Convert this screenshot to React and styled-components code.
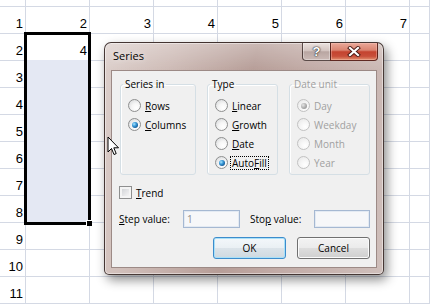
import React from 'react'
import styled, { createGlobalStyle } from 'styled-components'

const GlobalStyle = createGlobalStyle`
  html, body {
    margin: 0;
    padding: 0;
    background: #fff;
  }
`

const Page = styled.div`
  position: relative;
  width: 430px;
  height: 306px;
  overflow: hidden;
  background: #fff;
`

const Sheet = styled.div`
  display: grid;
  grid-template-columns: 26px repeat(6, 64px) 1fr;
  grid-template-rows: 7px repeat(11, 27px);
  font-family: "Liberation Sans", Arial, sans-serif;
  font-size: 13px;
`

const Cell = styled.div`
  grid-row: ${p => p.$row};
  grid-column: ${p => p.$col};
  display: flex;
  justify-content: flex-end;
  align-items: flex-end;
  padding: 0 2px 2px 0;
  line-height: 15px;
  color: #000;
  border-right: 1px solid #d4d9e4;
  border-bottom: 1px solid ${p => (p.$inSel ? '#e4e8f3' : '#d4d9e4')};
  background: ${p => (p.$shade ? '#e4e8f3' : '#fff')};
  overflow: hidden;
`

const Selection = styled.div`
  grid-row: 3 / 10;
  grid-column: 2;
  position: relative;
  margin: -2px -1px -2px -2px;
  border: 3px solid #000;
  pointer-events: none;
`

const FillHandle = styled.span`
  position: absolute;
  right: -4px;
  bottom: -4px;
  width: 5px;
  height: 5px;
  background: #000;
  border: 1px solid #fff;
  border-width: 1px 0 0 1px;
`

const Dialog = styled.div`
  position: absolute;
  left: 104px;
  top: 42px;
  width: 280px;
  height: 233px;
  box-sizing: border-box;
  display: flex;
  flex-direction: column;
  border: 1px solid rgba(45, 30, 28, 0.85);
  border-radius: 7px 7px 5px 5px;
  background:
    linear-gradient(180deg, rgba(255, 255, 255, 0.28) 0, rgba(255, 255, 255, 0) 28px),
    linear-gradient(100deg, #dccfcb 0%, #cdbab5 22%, #b69d97 48%, #c1aaa5 66%, #cfbfbb 100%);
  box-shadow: inset 0 0 0 1px rgba(255, 255, 255, 0.45), 3px 5px 11px rgba(0, 0, 0, 0.45);
  font-family: "Open Sans", "Noto Sans", sans-serif;
  font-size: 10px;
  color: #000;
`

const TitleBar = styled.div`
  height: 27px;
  display: flex;
  align-items: flex-start;
`

const Title = styled.div`
  padding-left: 8px;
  font-size: 11px;
  line-height: 25px;
  text-shadow: 0 0 6px rgba(255, 255, 255, 0.8);
`

const CaptionButtons = styled.div`
  margin-left: auto;
  margin-right: 5px;
  display: flex;
`

const HelpButton = styled.div`
  box-sizing: border-box;
  width: 28px;
  height: 18px;
  display: flex;
  align-items: center;
  justify-content: center;
  border: 1px solid rgba(55, 38, 36, 0.8);
  border-top: 0;
  border-right: 0;
  border-radius: 0 0 0 4px;
  background: linear-gradient(180deg, #ece2df 0%, #d3c4c0 45%, #b9a6a2 52%, #cbbab6 100%);
  box-shadow: inset 0 0 0 1px rgba(255, 255, 255, 0.35);
  font-family: "Liberation Sans", Arial, sans-serif;
  font-weight: bold;
  font-size: 13px;
  color: #fff;
  text-shadow: 0 0 1px #333, 0 0 1px #333, 0 0 2px #444;
`

const CloseButton = styled.div`
  box-sizing: border-box;
  width: 48px;
  height: 18px;
  display: flex;
  align-items: center;
  justify-content: center;
  border: 1px solid rgba(80, 28, 22, 0.9);
  border-top: 0;
  border-radius: 0 0 4px 0;
  background: linear-gradient(180deg, #eaa898 0%, #da8471 42%, #c4432f 52%, #c84f3a 78%, #e2906f 100%);
  box-shadow: inset 0 0 0 1px rgba(255, 210, 200, 0.35);
`

const Client = styled.div`
  flex: 1;
  margin: 0 6px 6px;
  display: flex;
  flex-direction: column;
  padding: 7px 6px 0 7px;
  border: 1px solid #9c8a86;
  background: #f0f0f0;
`

const GroupRow = styled.div`
  display: flex;
  gap: 11px;
  margin-left: 1px;
`

const Group = styled.fieldset`
  box-sizing: border-box;
  width: ${p => p.$w}px;
  margin: 0;
  padding: 0;
  border: 1px solid #d5dfe5;
  border-radius: 3px;
  box-shadow: inset 1px 1px 0 #fff;
`

const Legend = styled.legend`
  margin-left: 2px;
  padding: 0 2px;
  line-height: 13px;
  color: ${p => (p.$disabled ? '#a0a0a0' : '#000')};
`

const OptionList = styled.div`
  display: flex;
  flex-direction: column;
  padding: 5px 0 2px 7px;
`

const Option = styled.div`
  height: 19px;
  display: flex;
  align-items: center;
  gap: 2px;
  color: ${p => (p.$disabled ? '#a0a0a0' : '#000')};
`

const Radio = styled.span`
  position: relative;
  flex: none;
  box-sizing: border-box;
  width: 13px;
  height: 13px;
  border-radius: 50%;
  border: 1px solid ${p => (p.$disabled ? '#c2c2c2' : '#8e8f8f')};
  background: radial-gradient(circle at 65% 70%, #ffffff 0%, #f6f6f6 40%, ${p => (p.$disabled ? '#e6e6e6' : '#d2d4d6')} 100%);

  &::after {
    content: '';
    display: ${p => (p.$checked ? 'block' : 'none')};
    position: absolute;
    left: 2.5px;
    top: 2.5px;
    width: 6px;
    height: 6px;
    border-radius: 50%;
    background: ${p =>
      p.$disabled
        ? 'radial-gradient(circle at 35% 35%, #e6e6e6 0%, #ababab 55%, #8c8c8c 100%)'
        : 'radial-gradient(circle at 35% 35%, #b0e6fd 0%, #3f9fdc 35%, #17609e 70%, #0e3e6c 100%)'};
  }
`

const Label = styled.span`
  padding: 0 1px;
  line-height: 12px;
  border: 1px dotted ${p => (p.$focus ? '#000' : 'transparent')};
`

const Key = styled.span`
  text-decoration: underline;
`

const CheckRow = styled.div`
  margin-top: 11px;
  height: 13px;
  display: flex;
  align-items: center;
  gap: 4px;
`

const Checkbox = styled.span`
  flex: none;
  box-sizing: border-box;
  width: 13px;
  height: 13px;
  border: 1px solid #8e8f8f;
  background: linear-gradient(135deg, #c9ccd0 0%, #eeeeef 70%, #f8f8f8 100%);
  box-shadow: inset 0 0 0 2px #f4f4f4;
`

const FieldRow = styled.div`
  margin-top: 11px;
  height: 18px;
  display: flex;
  align-items: center;
`

const FieldLabel = styled.span`
  width: ${p => p.$w}px;
  margin-left: ${p => p.$gap || 0}px;
  flex: none;
`

const TextBox = styled.div`
  box-sizing: border-box;
  width: ${p => p.$w}px;
  height: 18px;
  padding-left: 3px;
  display: flex;
  align-items: center;
  border: 1px solid #a5b8d2;
  box-shadow: inset 0 0 0 1px #e3eaf3;
  background: #f6f7f9;
  color: #8d8d8d;
`

const ButtonRow = styled.div`
  margin-top: 9px;
  display: flex;
  justify-content: flex-end;
  gap: 11px;
`

const Button = styled.div`
  box-sizing: border-box;
  width: 73px;
  height: 22px;
  display: flex;
  align-items: center;
  justify-content: center;
  border-radius: 3px;
  border: 1px solid ${p => (p.$default ? '#3c8ccc' : '#707070')};
  box-shadow: inset 0 0 0 1px ${p => (p.$default ? '#a9e0f8' : '#fbfbfb')};
  background: ${p =>
    p.$default
      ? 'linear-gradient(180deg, #f3f7fa 0%, #eaf0f4 48%, #dbe3e9 52%, #cfd9e0 100%)'
      : 'linear-gradient(180deg, #f3f3f3 0%, #ebebeb 48%, #dddddd 52%, #cfcfcf 100%)'};
`

const Cursor = styled.svg`
  position: absolute;
  left: 107px;
  top: 136px;
`

const CloseIcon = () => (
  <svg width="14" height="11" viewBox="0 0 14 11">
    <path d="M3 2 L11 9 M11 2 L3 9" stroke="#4a1a14" strokeWidth="4" strokeLinecap="square" />
    <path d="M3 2 L11 9 M11 2 L3 9" stroke="#fff" strokeWidth="2.2" strokeLinecap="square" />
  </svg>
)

function cellText(r, c) {
  if (r === 0) return ''
  if (c === 0) return String(r)
  if (r === 1 && c <= 6) return String(c + 1)
  if (r === 2 && c === 1) return '4'
  return ''
}

const cells = []
for (let r = 0; r < 12; r++) {
  for (let c = 0; c < 8; c++) {
    cells.push({ r, c, text: cellText(r, c) })
  }
}

const seriesIn = [
  { pre: '', key: 'R', post: 'ows' },
  { pre: '', key: 'C', post: 'olumns', checked: true },
]

const types = [
  { pre: '', key: 'L', post: 'inear' },
  { pre: '', key: 'G', post: 'rowth' },
  { pre: '', key: 'D', post: 'ate' },
  { pre: 'Auto', key: 'F', post: 'ill', checked: true, focus: true },
]

const units = [
  { pre: 'Day', checked: true },
  { pre: 'Weekday' },
  { pre: 'Month' },
  { pre: 'Year' },
]

const Options = ({ items, disabled }) => (
  <OptionList>
    {items.map(o => (
      <Option key={o.pre + (o.key || '') + (o.post || '')} $disabled={disabled}>
        <Radio $checked={o.checked} $disabled={disabled} />
        <Label $focus={o.focus}>
          {o.pre}
          {o.key && <Key>{o.key}</Key>}
          {o.post}
        </Label>
      </Option>
    ))}
  </OptionList>
)

const App = () => {
  return (
    <Page>
      <GlobalStyle />
      <Sheet>
        {cells.map(({ r, c, text }) => (
          <Cell
            key={r + '-' + c}
            $row={r + 1}
            $col={c + 1}
            $inSel={c === 1 && r >= 2 && r <= 8}
            $shade={c === 1 && r >= 3 && r <= 8}
          >
            {text}
          </Cell>
        ))}
        <Selection>
          <FillHandle />
        </Selection>
      </Sheet>

      <Dialog>
        <TitleBar>
          <Title>Series</Title>
          <CaptionButtons>
            <HelpButton>?</HelpButton>
            <CloseButton>
              <CloseIcon />
            </CloseButton>
          </CaptionButtons>
        </TitleBar>
        <Client>
          <GroupRow>
            <Group $w={76}>
              <Legend>Series in</Legend>
              <Options items={seriesIn} />
            </Group>
            <Group $w={71}>
              <Legend>Type</Legend>
              <Options items={types} />
            </Group>
            <Group $w={81}>
              <Legend $disabled>Date unit</Legend>
              <Options items={units} disabled />
            </Group>
          </GroupRow>

          <CheckRow>
            <Checkbox />
            <span>
              <Key>T</Key>rend
            </span>
          </CheckRow>

          <FieldRow>
            <FieldLabel $w={64}>
              <Key>S</Key>tep value:
            </FieldLabel>
            <TextBox $w={57}>1</TextBox>
            <FieldLabel $w={64} $gap={10}>
              Sto<Key>p</Key> value:
            </FieldLabel>
            <TextBox $w={56} />
          </FieldRow>

          <ButtonRow>
            <Button $default>OK</Button>
            <Button>Cancel</Button>
          </ButtonRow>
        </Client>
      </Dialog>

      <Cursor width="13" height="20" viewBox="0 0 13 20">
        <path
          d="M1 1 L1 16 L4.5 12.5 L7 18.5 L9.2 17.6 L6.8 11.8 L11.5 11.8 Z"
          fill="#fff"
          stroke="#000"
          strokeWidth="1"
          strokeLinejoin="miter"
        />
      </Cursor>
    </Page>
  )
}

export default App
